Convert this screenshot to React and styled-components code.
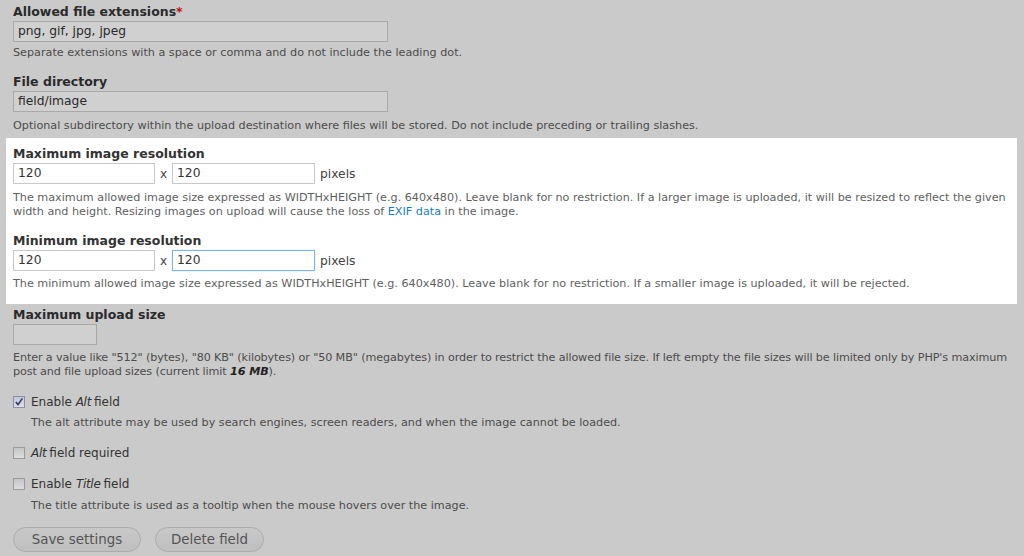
import React from "react";
import styled, { createGlobalStyle, css } from "styled-components";

const GlobalStyle = createGlobalStyle`
  body {
    margin: 0;
    background: #cacaca;
    font-family: "DejaVu Sans", Verdana, sans-serif;
    color: #2c2c2c;
  }
`;

const Page = styled.div`
  width: 1024px;
  height: 556px;
  overflow: hidden;
  padding: 4px 7px 0 6px;
  box-sizing: border-box;
`;

const Section = styled.div`
  padding: 0 7px;
`;

const Highlight = styled.div`
  background: #fff;
  padding: 8px 7px 13px;
  margin: 5px 0 3px;
`;

const FormItem = styled.div`
  margin-bottom: ${(p) => p.gap ?? 14}px;
`;

const Label = styled.div`
  font-size: 12.5px;
  font-weight: bold;
  line-height: 16px;
  height: 16px;
  margin-bottom: 1px;
  color: ${(p) => (p.light ? "#333" : "#2a2a2a")};
`;

const Required = styled.span`
  color: #b01818;
`;

const TextInput = styled.div`
  box-sizing: border-box;
  width: ${(p) => p.width}px;
  height: 21px;
  padding: 0 4px;
  font-size: 12.3px;
  line-height: 19px;
  border: 1px solid ${(p) => (p.focus ? "#7fb4e0" : p.light ? "#c8c8c8" : "#a9a9a9")};
  background: ${(p) => (p.light ? "#fff" : "#d0d0d0")};
  color: ${(p) => (p.light ? "#333" : "#2a2a2a")};
  ${(p) =>
    p.focus &&
    css`
      box-shadow: 0 0 1px #9cc8ee;
    `}
`;

const Row = styled.div`
  display: flex;
  align-items: center;
`;

const Times = styled.span`
  font-size: 12px;
  color: #444;
  width: 17px;
  text-align: center;
`;

const Unit = styled.span`
  font-size: 12.3px;
  color: #444;
  margin-left: 5px;
`;

const Description = styled.div`
  font-size: 11.2px;
  line-height: 14px;
  margin-top: ${(p) => p.top ?? 5}px;
  padding-left: ${(p) => p.indent ?? 0}px;
  letter-spacing: ${(p) => (p.tight ? "-0.12px" : "normal")};
  color: ${(p) => (p.light ? "#5f5f5f" : "#4c4c4c")};
  white-space: nowrap;
`;

const Link = styled.a`
  color: #1c7cc4;
  text-decoration: none;
`;

const CheckRow = styled.label`
  display: flex;
  align-items: center;
  height: 16px;
  font-size: 12px;
  color: #333;
`;

const Box = styled.span`
  box-sizing: border-box;
  width: 12px;
  height: 12px;
  margin-right: 6px;
  border: 1px solid ${(p) => (p.checked ? "#8a90a0" : "#9a9a9a")};
  background: ${(p) =>
    p.checked
      ? "linear-gradient(#c2c7d6, #dde0e9)"
      : "linear-gradient(#c4c4c4, #dedede)"};
  display: flex;
  align-items: center;
  justify-content: center;
`;

const Em = styled.em`
  font-style: italic;
  margin-right: 3px;
  margin-left: ${(p) => p.left ?? 0}px;
  letter-spacing: -0.3px;
`;

const Strong = styled.strong`
  font-style: italic;
  font-weight: bold;
  color: #222;
`;

const Actions = styled.div`
  display: flex;
  gap: 14px;
  margin-top: 14px;
`;

const Button = styled.button`
  box-sizing: border-box;
  width: ${(p) => p.width}px;
  height: 25px;
  border-radius: 13px;
  border: 1px solid #acacac;
  background: linear-gradient(#c8c8c8, #bfbfbf);
  color: #545454;
  font-family: "DejaVu Sans", Verdana, sans-serif;
  font-size: 13.4px;
  padding: 0;
`;

const Check = () => (
  <svg width="10" height="10" viewBox="0 0 10 10">
    <path d="M1.8 5 L4 7.6 L8.4 1.4" fill="none" stroke="#2e3d6e" strokeWidth="1.6" />
  </svg>
);

export default function App() {
  return (
    <>
      <GlobalStyle />
      <Page>
        <Section>
          <FormItem>
            <Label>
              Allowed file extensions<Required>*</Required>
            </Label>
            <TextInput width={375}>png, gif, jpg, jpeg</TextInput>
            <Description top={4}>
              Separate extensions with a space or comma and do not include the leading dot.
            </Description>
          </FormItem>
          <FormItem gap={0}>
            <Label>File directory</Label>
            <TextInput width={375}>field/image</TextInput>
            <Description top={7}>
              Optional subdirectory within the upload destination where files will be stored. Do not include preceding or trailing slashes.
            </Description>
          </FormItem>
        </Section>

        <Highlight>
          <FormItem>
            <Label light>Maximum image resolution</Label>
            <Row>
              <TextInput light width={142}>120</TextInput>
              <Times>x</Times>
              <TextInput light width={143}>120</TextInput>
              <Unit>pixels</Unit>
            </Row>
            <Description light top={7}>
              The maximum allowed image size expressed as WIDTHxHEIGHT (e.g. 640x480). Leave blank for no restriction. If a larger image is uploaded, it will be resized to reflect the given
              <br />
              width and height. Resizing images on upload will cause the loss of <Link href="#">EXIF data</Link> in the image.
            </Description>
          </FormItem>
          <FormItem gap={0}>
            <Label light>Minimum image resolution</Label>
            <Row>
              <TextInput light width={142}>120</TextInput>
              <Times>x</Times>
              <TextInput light focus width={143}>120</TextInput>
              <Unit>pixels</Unit>
            </Row>
            <Description light top={6}>
              The minimum allowed image size expressed as WIDTHxHEIGHT (e.g. 640x480). Leave blank for no restriction. If a smaller image is uploaded, it will be rejected.
            </Description>
          </FormItem>
        </Highlight>

        <Section>
          <FormItem gap={15}>
            <Label>Maximum upload size</Label>
            <TextInput width={84} />
            <Description tight top={6}>
              Enter a value like "512" (bytes), "80 KB" (kilobytes) or "50 MB" (megabytes) in order to restrict the allowed file size. If left empty the file sizes will be limited only by PHP's maximum
              <br />
              post and file upload sizes (current limit <Strong>16 MB</Strong>).
            </Description>
          </FormItem>
          <FormItem gap={15}>
            <CheckRow>
              <Box checked>
                <Check />
              </Box>
              Enable&nbsp;<Em>Alt</Em>field
            </CheckRow>
            <Description indent={18} top={6}>
              The alt attribute may be used by search engines, screen readers, and when the image cannot be loaded.
            </Description>
          </FormItem>
          <FormItem gap={15}>
            <CheckRow>
              <Box />
              <Em>Alt</Em>field required
            </CheckRow>
          </FormItem>
          <FormItem gap={0}>
            <CheckRow>
              <Box />
              Enable <Em left={4}>Title</Em>field
            </CheckRow>
            <Description indent={18} top={7}>
              The title attribute is used as a tooltip when the mouse hovers over the image.
            </Description>
          </FormItem>
          <Actions>
            <Button width={128}>Save settings</Button>
            <Button width={109}>Delete field</Button>
          </Actions>
        </Section>
      </Page>
    </>
  );
}
